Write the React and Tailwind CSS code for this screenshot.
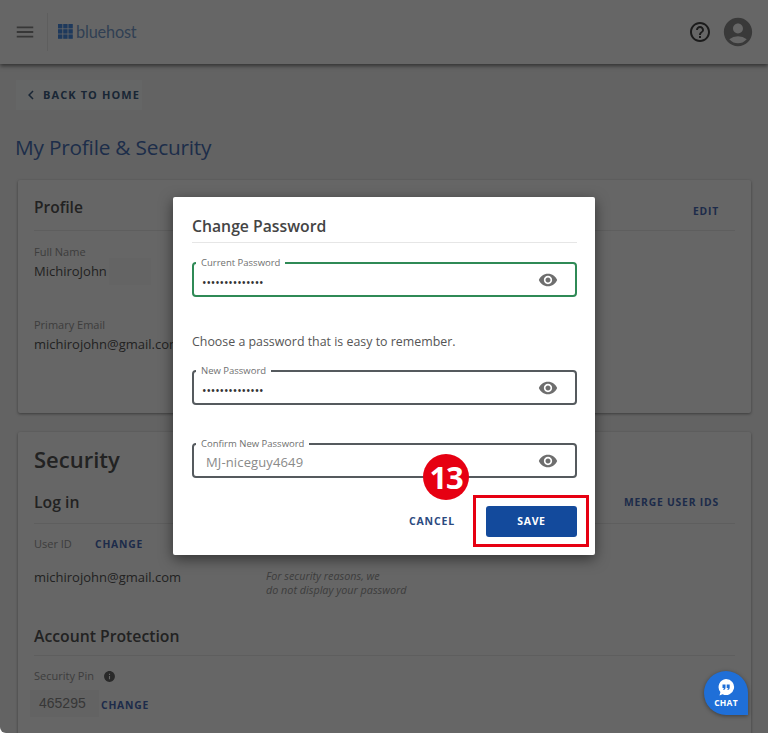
import React from 'react';
import { MdMenu, MdHelpOutline, MdAccountCircle, MdVisibility, MdChevronLeft, MdInfo } from 'react-icons/md';

const font = { fontFamily: '"Open Sans", sans-serif' };

const LogoGrid = () => (
  <svg width="15" height="15" viewBox="0 0 15 15" className="fill-[#4d8fe6]">
    {[0, 5.2, 10.4].map((y) =>
      [0, 5.2, 10.4].map((x) => <rect key={`${x}-${y}`} x={x} y={y} width="4.4" height="4.4" />)
    )}
  </svg>
);

const LinkLabel = ({ children, className = '' }) => (
  <span className={`text-[10.3px] font-bold tracking-[0.08em] text-[#4a6cb8] ${className}`}>{children}</span>
);

const Field = ({ label, value, muted, green, className = '' }) => (
  <div
    className={`relative flex h-[35px] items-center justify-between rounded-[4px] border-2 pl-[8px] pr-[17px] ${
      green ? 'border-[#2f8a56]' : 'border-[#555a5e]'
    } ${className}`}
  >
    <span className="absolute -top-[7px] left-[2px] bg-white px-[5px] text-[9.5px] leading-[12px] text-[#707070]">
      {label}
    </span>
    {muted ? (
      <span className="pl-[4px] pt-[5px] text-[13px] tracking-[0.01em] text-[#8a8a8a]">{value}</span>
    ) : (
      <span className="pt-[7px] text-[12px] leading-none tracking-[-0.01em] text-[#333]">{value}</span>
    )}
    <MdVisibility className="h-[20px] w-[20px] text-[#6e6e6e]" />
  </div>
);

const App = () => {
  return (
    <div className="relative h-[733px] w-[768px] overflow-hidden rounded-bl-[6px] bg-[#f7f7f7]" style={font}>
      {/* pagina de fondo */}
      <header className="flex h-[64px] items-center justify-between bg-white pl-[14px] pr-[13px] shadow-[0_2px_4px_rgba(0,0,0,0.5)]">
        <div className="flex items-center">
          <MdMenu className="h-[22px] w-[22px] text-[#8a8a8a]" />
          <div className="ml-[11px] h-[38px] w-px bg-[#ececec]" />
          <div className="ml-[10px] flex items-center gap-[3px]">
            <LogoGrid />
            <span className="text-[16.3px] leading-none tracking-[-0.01em] text-[#7a9fd0]" style={{ fontFamily: 'Lato, sans-serif' }}>
              bluehost
            </span>
          </div>
        </div>
        <div className="flex items-center gap-[9px]">
          <MdHelpOutline className="h-[24px] w-[24px] text-[#444]" />
          <MdAccountCircle className="h-[34px] w-[34px] text-[#909090]" />
        </div>
      </header>

      <main className="px-[16px] pt-[16px]">
        <div className="flex h-[30px] w-[126px] items-center bg-[#fdffff] pl-[6px]">
          <MdChevronLeft className="h-[18px] w-[18px] text-[#3f5f85]" />
          <span className="ml-[3px] text-[11px] font-bold tracking-[0.1em] text-[#3f5f85]">BACK TO HOME</span>
        </div>
        <h1 className="mt-[20px] -ml-[1px] text-[20.8px] leading-[34px] tracking-[-0.01em] text-[#4a72b8]">My Profile &amp; Security</h1>

        <section className="ml-[2px] mt-[16px] h-[233px] w-[733px] rounded-[2px] bg-white px-[16px] shadow-[0_1px_3px_rgba(0,0,0,0.4)]">
          <div className="flex h-[51px] items-center justify-between border-b border-[#eaeaea] pr-[16px]">
            <span className="mt-[5px] text-[15.5px] font-semibold text-[#555]">Profile</span>
            <LinkLabel className="mt-[13px]">EDIT</LinkLabel>
          </div>
          <div className="mt-[14px] text-[11px] leading-[14px] text-[#999]">Full Name</div>
          <div className="mt-[3px] flex h-[18px] items-center text-[13px] leading-[18px] text-[#555]">
            MichiroJohn
            <span className="ml-[2px] h-[27px] w-[42px] shrink-0 bg-[#f9f9f9]" />
          </div>
          <div className="mt-[38px] text-[11px] leading-[14px] text-[#999]">Primary Email</div>
          <div className="mt-[3px] text-[13px] leading-[18px] text-[#555]">michirojohn@gmail.com</div>
        </section>

        <section className="ml-[2px] mt-[19px] h-[320px] w-[733px] rounded-[2px] bg-white px-[16px] shadow-[0_1px_3px_rgba(0,0,0,0.4)]">
          <h2 className="pt-[10px] text-[22px] font-semibold leading-[34px] text-[#555]">Security</h2>
          <div className="mt-[10px] flex h-[38px] items-center justify-between border-b border-[#eaeaea] pb-[3px] pr-[16px]">
            <span className="text-[15.75px] font-semibold text-[#555]">Log in</span>
            <LinkLabel>MERGE USER IDS</LinkLabel>
          </div>
          <div className="mt-[11px] flex items-center">
            <span className="w-[61px] text-[11px] leading-[16px] text-[#999]">User ID</span>
            <LinkLabel className="mt-[2px]">CHANGE</LinkLabel>
          </div>
          <div className="mt-[16px] flex">
            <span className="w-[232px] text-[13px] leading-[18px] text-[#555]">michirojohn@gmail.com</span>
            <span className="pt-[1px] text-[10.8px] italic leading-[14px] text-[#999]">
              For security reasons, we
              <br />
              do not display your password
            </span>
          </div>
          <div className="mt-[26px] flex h-[33px] items-center border-b border-[#eaeaea] pb-[6px] text-[15.75px] font-semibold text-[#555]">
            Account Protection
          </div>
          <div className="mt-[12px] flex items-center gap-[9px] text-[11px] leading-[16px] text-[#999]">
            Security Pin
            <MdInfo className="h-[13px] w-[13px] text-[#666]" />
          </div>
          <div className="mt-[6px] flex items-center">
            <span className="-ml-[4px] flex h-[27px] w-[69px] items-center bg-[#f8f8f8] pl-[9px] text-[14px] text-[#8a8a8a]" style={{ fontFamily: '"Liberation Sans", sans-serif' }}>
              465295
            </span>
            <LinkLabel className="ml-[2px] mt-[3px]">CHANGE</LinkLabel>
          </div>
        </section>
      </main>

      {/* capa oscura */}
      <div className="absolute inset-0 bg-black/60" />

      {/* dialogo */}
      <div className="absolute left-[173px] top-[197px] h-[358px] w-[422px] rounded-[2px] bg-white pl-[19px] pr-[18px] shadow-[0_4px_14px_rgba(0,0,0,0.5)]">
        <div className="flex h-[46px] items-end border-b border-[#e6e6e6] pb-[3px] text-[15.75px] font-semibold text-[#444]">
          Change Password
        </div>
        <Field label="Current Password" value="••••••••••••••" green className="mt-[19px]" />
        <p className="mt-[36px] text-[12.4px] leading-[18px] text-[#555]">Choose a password that is easy to remember.</p>
        <Field label="New Password" value="••••••••••••••" className="mt-[19px]" />
        <Field label="Confirm New Password" value="MJ-niceguy4649" muted className="mt-[38px]" />
        <div className="mt-[28px] flex items-center justify-end">
          <span className="text-[10.5px] font-bold tracking-[0.08em] text-[#2b4a80]">CANCEL</span>
          <button className="ml-[31px] h-[31px] w-[91px] rounded-[3px] bg-[#134a9c] text-[10.5px] font-bold tracking-[0.06em] text-white">
            SAVE
          </button>
        </div>
      </div>

      {/* anotaciones */}
      <div className="absolute left-[473px] top-[495px] h-[52px] w-[116px] border-[3px] border-[#e60012]" />
      <div className="absolute left-[423px] top-[454px] flex h-[46px] w-[46px] items-center justify-center rounded-full bg-[#e60012] text-[31px] font-bold tracking-[-0.04em] text-white">
        13
      </div>

      {/* chat */}
      <div className="absolute left-[704px] top-[671px] flex h-[44px] w-[44px] flex-col items-center rounded-bl-full rounded-tl-full rounded-tr-full bg-[#1f6fd8] pt-[7px] shadow-[0_1px_4px_rgba(0,0,0,0.4)]">
        <svg width="18" height="18" viewBox="0 0 18 18">
          <path d="M9 1a8 8 0 1 1-3.4 15.2L2.5 17.4l.9-3.4A8 8 0 0 1 9 1Z" fill="#fff" />
          <path d="M5.5 6.5h3v3c0 1.4-.8 2.2-2 2.4l-.3-.9c.6-.2.9-.5 1-1H5.5Zm4.2 0h3v3c0 1.4-.8 2.2-2 2.4l-.3-.9c.6-.2.9-.5 1-1H9.7Z" fill="#1f6fd8" />
        </svg>
        <span className="mt-[1px] text-[8.5px] font-bold leading-[11px] tracking-[0.03em] text-white">CHAT</span>
      </div>
    </div>
  );
};

export default App;
